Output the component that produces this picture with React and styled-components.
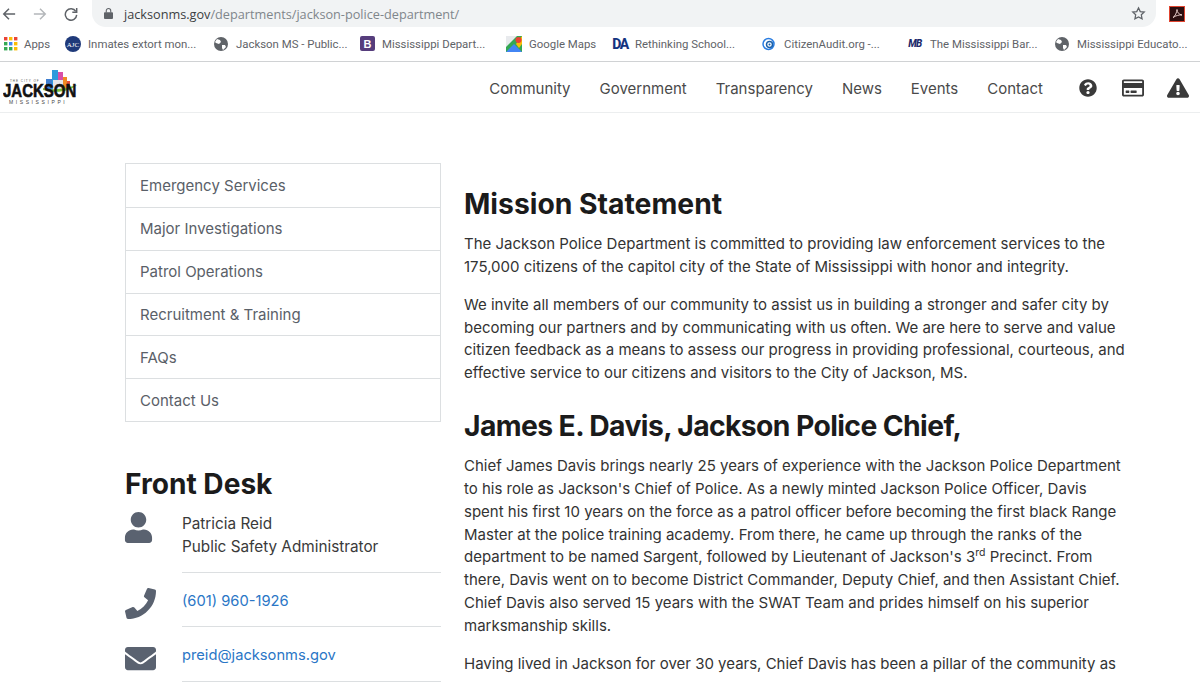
import styled, { createGlobalStyle } from "styled-components";
import {
  FaUser,
  FaPhone,
  FaEnvelope,
  FaQuestionCircle,
  FaRegCreditCard,
  FaExclamationTriangle,
} from "react-icons/fa";

const GlobalStyle = createGlobalStyle`
  html, body {
    margin: 0;
    padding: 0;
    height: 682px;
    overflow: hidden;
    background: #fff;
    font-family: "Inter", "Liberation Sans", sans-serif;
  }
  * { box-sizing: border-box; }
`;

const Toolbar = styled.div`
  display: flex;
  align-items: center;
  height: 27px;
  background: #fff;
`;

const NavButtons = styled.div`
  display: flex;
  align-items: center;
  gap: 17px;
  width: 92px;
  padding-left: 2px;
`;

const UrlBar = styled.div`
  display: flex;
  align-items: center;
  width: 1064px;
  height: 27px;
  padding: 0 10px 0 12px;
  background: #f1f3f4;
  border-radius: 0 0 14px 14px;
  font-family: "Open Sans", sans-serif;
  font-size: 12.7px;
  color: #80868b;
`;

const UrlHost = styled.span`
  margin-left: 11px;
  color: #3c4043;
`;

const StarWrap = styled.div`
  margin-left: auto;
  display: flex;
`;

const PdfIcon = styled.div`
  width: 16px;
  height: 16px;
  margin-left: 13px;
  background: #2b0f10;
  border: 1px solid #e0442f;
  display: flex;
  align-items: center;
  justify-content: center;
`;

const BookmarkBar = styled.div`
  display: flex;
  align-items: center;
  height: 35px;
  padding: 0 0 1px 3px;
  border-bottom: 1px solid #d0d2d4;
`;

const Bookmark = styled.div`
  display: flex;
  align-items: center;
  width: ${(props) => props.$w}px;
  flex: none;
  font-family: "Roboto", sans-serif;
  font-size: 11.4px;
  color: #5f6368;
  white-space: nowrap;
`;

const FavSlot = styled.span`
  display: flex;
  width: 16px;
  height: 16px;
  align-items: center;
  justify-content: center;
  margin-right: ${(props) => props.$gap || 7}px;
  flex: none;
`;

const DaMark = styled.span`
  color: #14337f;
  font-weight: 800;
  font-size: 14px;
  letter-spacing: -1.5px;
`;

const MbMark = styled.span`
  color: #1d2a6b;
  font-weight: 800;
  font-size: 10px;
  font-style: italic;
  letter-spacing: -0.5px;
`;

const Header = styled.header`
  display: flex;
  align-items: center;
  height: 51px;
  padding: 2px 11px 0 3px;
  border-bottom: 1px solid #eceeef;
`;

const LogoWrap = styled.div`
  display: flex;
  margin-top: -2px;
`;

const Nav = styled.nav`
  display: flex;
  align-items: center;
  gap: 29px;
  margin-left: auto;
`;

const NavLink = styled.a`
  font-size: 15px;
  color: #4a4a4a;
`;

const NavIcons = styled.div`
  display: flex;
  align-items: center;
  gap: 23px;
  margin-left: 36px;
  color: #3a3a3a;

  svg:first-child {
    margin-right: 2px;
  }
`;

const Page = styled.div`
  display: grid;
  grid-template-columns: 316px 656px;
  column-gap: 23px;
  padding: 50px 0 0 125px;
`;

const SideNav = styled.ul`
  list-style: none;
  margin: 0 0 42px;
  padding: 0;
  border: 1px solid #dcdfe1;
`;

const SideItem = styled.li`
  height: 42.850px;
  padding-left: 14px;
  display: flex;
  align-items: center;
  font-size: 15px;
  color: #5a6068;
  border-top: ${(props) => (props.$first ? "none" : "1px solid #dcdfe1")};
`;

const DeskTitle = styled.h2`
  margin: 0 0 8px;
  font-size: 28.100px;
  line-height: 40px;
  font-weight: 700;
  color: #1b1b1b;
`;

const ContactRow = styled.div`
  display: flex;
  height: ${(props) => props.$h}px;
`;

const ContactIcon = styled.div`
  width: 57px;
  flex: none;
  color: #5a6270;
  display: flex;
  align-items: ${(props) => (props.$top ? "flex-start" : "center")};
  padding-top: ${(props) => (props.$top ? 0 : 7)}px;

  svg {
    margin-left: ${(props) => (props.$top ? -2 : 0)}px;
  }
`;

const ContactBody = styled.div`
  flex: 1;
  display: flex;
  flex-direction: column;
  justify-content: ${(props) => (props.$top ? "flex-start" : "center")};
  padding-top: ${(props) => (props.$top ? 0 : 3)}px;
  border-bottom: 1px solid #dcdfe1;
  font-size: 15.3px;
  line-height: 23px;
  color: #3a3a3a;
`;

const ContactLink = styled.a`
  font-size: 14.7px;
  color: #2a76c6;
`;

const Main = styled.main`
  padding-top: 21px;
`;

const Heading = styled.h1`
  margin: ${(props) => (props.$second ? "21px 0 9px" : "0 0 9px")};
  font-size: 28.300px;
  letter-spacing: ${(props) => (props.$second ? "-0.6px" : "0")};
  line-height: 40px;
  font-weight: 700;
  color: #1b1b1b;
  white-space: nowrap;
`;

const Para = styled.p`
  margin: 0 0 15px;
  font-size: 15px;
  line-height: 22.850px;
  color: #333;
  white-space: nowrap;
`;

const Ord = styled.sup`
  font-size: 10.500px;
  line-height: 0;
`;

function Globe() {
  return (
    <svg width="14" height="14" viewBox="0 0 14 14">
      <circle cx="7" cy="7" r="7" fill="#5f6368" />
      <path d="M3 2l3 1 1 2-2 2-3-1-1-1zM8 8l3 0 1 2-3 3-1-2z" fill="#fff" />
    </svg>
  );
}

function AppsGrid() {
  const colors = ["#ea4335", "#fbbc05", "#ea4335", "#34a853", "#4285f4", "#fbbc05", "#34a853", "#34a853", "#fbbc05"];
  return (
    <svg width="14" height="14" viewBox="0 0 14 14">
      {colors.map((c, i) => (
        <rect key={i} x={(i % 3) * 5} y={Math.floor(i / 3) * 5} width="3.400" height="3.400" fill={c} />
      ))}
    </svg>
  );
}

function AjcIcon() {
  return (
    <svg width="16" height="16" viewBox="0 0 16 16">
      <circle cx="8" cy="8" r="8" fill="#1f3a7a" />
      <text x="8" y="10.500" textAnchor="middle" fontSize="7" fontFamily="Liberation Serif" fill="#fff">AJC</text>
    </svg>
  );
}

function BootstrapIcon() {
  return (
    <svg width="15" height="15" viewBox="0 0 15 15">
      <rect width="15" height="15" rx="2" fill="#563d7c" />
      <text x="7.500" y="11.500" textAnchor="middle" fontSize="11" fontWeight="700" fontFamily="Liberation Sans" fill="#fff">B</text>
    </svg>
  );
}

function MapsIcon() {
  return (
    <svg width="16" height="16" viewBox="0 0 16 16">
      <rect width="16" height="16" fill="#34a853" />
      <path d="M0 16L8 8l8 8z" fill="#4285f4" />
      <path d="M16 0v8l-3 4-3-4z" fill="#fbbc05" />
      <path d="M0 0h11L0 11z" fill="#e8eaed" />
      <circle cx="12.500" cy="4" r="3" fill="#ea4335" />
    </svg>
  );
}

function CitizenIcon() {
  return (
    <svg width="14" height="14" viewBox="0 0 14 14" fill="none" stroke="#2a7de1">
      <circle cx="6.500" cy="7" r="5.500" strokeWidth="1.500" />
      <circle cx="7.500" cy="7.500" r="3" strokeWidth="1.500" stroke="#1a5fa8" />
      <circle cx="7.500" cy="7.500" r="1" fill="#1a5fa8" stroke="none" />
    </svg>
  );
}

// buildings, swoosh and the three lines of the city logo
function Logo() {
  return (
    <svg width="76" height="40" viewBox="0 0 76 40">
      <rect x="43" y="12" width="8" height="11" fill="#3f7fd0" />
      <rect x="49" y="3" width="6" height="19" fill="#2e9bdc" />
      <rect x="55" y="5" width="5" height="17" fill="#d94fa8" />
      <rect x="50" y="13" width="10" height="10" fill="#e6e6ea" />
      <rect x="60" y="10" width="4" height="12" fill="#f08a24" />
      <rect x="64" y="14" width="3" height="8" fill="#e8503a" />
      <path d="M40 21c10 3 20 1 34-3-7 6-20 9-34 5z" fill="#7dbb3c" />
      <text x="7" y="15" fontSize="3" letterSpacing="1" fontFamily="Liberation Sans" fill="#555">THE CITY OF</text>
      <text transform="translate(0 30) scale(1 1.250)" fontSize="15" fontWeight="700" fontFamily="Liberation Sans" stroke="#111" strokeWidth="0.500" fill="#111">JACKSON</text>
      <text x="6" y="37" fontSize="5" letterSpacing="2.600" fontFamily="Liberation Sans" fill="#444">MISSISSIPPI</text>
    </svg>
  );
}

const bookmarks = [
  { w: 62, icon: <AppsGrid />, gap: 5, label: "Apps" },
  { w: 148, icon: <AjcIcon />, label: "Inmates extort mon..." },
  { w: 146, icon: <Globe />, label: "Jackson MS - Public..." },
  { w: 147, icon: <BootstrapIcon />, label: "Mississippi Depart..." },
  { w: 106, icon: <MapsIcon />, label: "Google Maps" },
  { w: 149, icon: <DaMark>DA</DaMark>, label: "Rethinking School..." },
  { w: 146, icon: <CitizenIcon />, label: "CitizenAudit.org -..." },
  { w: 147, icon: <MbMark>MB</MbMark>, label: "The Mississippi Bar..." },
  { w: 130, icon: <Globe />, label: "Mississippi Educato..." },
];

const sideItems = [
  "Emergency Services",
  "Major Investigations",
  "Patrol Operations",
  "Recruitment & Training",
  "FAQs",
  "Contact Us",
];

const navItems = ["Community", "Government", "Transparency", "News", "Events", "Contact"];

function App() {
  return (
    <>
      <GlobalStyle />
      <Toolbar>
        <NavButtons>
          <svg width="14" height="14" viewBox="0 0 16 16" fill="none" stroke="#5f6368" strokeWidth="1.700">
            <path d="M15 8H2M8 2L2 8l6 6" />
          </svg>
          <svg width="14" height="14" viewBox="0 0 16 16" fill="none" stroke="#b4b7ba" strokeWidth="1.700">
            <path d="M1 8h13M8 2l6 6-6 6" />
          </svg>
          <svg width="14" height="14" viewBox="0 0 16 16" fill="none" stroke="#5f6368" strokeWidth="1.700">
            <path d="M13.500 5A6.500 6.500 0 1 0 14.500 9" />
            <path d="M14.500 1v5H9.500" />
          </svg>
        </NavButtons>
        <UrlBar>
          <svg width="9" height="11" viewBox="0 0 10 12">
            <rect y="4.500" width="10" height="7.500" rx="1" fill="#5f6368" />
            <path d="M2.500 5V3a2.500 2.500 0 0 1 5 0v2" fill="none" stroke="#5f6368" strokeWidth="1.200" />
          </svg>
          <UrlHost>jacksonms.gov</UrlHost>/departments/jackson-police-department/
          <StarWrap>
            <svg width="15" height="15" viewBox="0 0 24 24" fill="none" stroke="#5f6368" strokeWidth="2">
              <path d="M12 3l2.800 5.900 6.400.800-4.700 4.400 1.200 6.400L12 17.400l-5.700 3.100 1.200-6.400L2.800 9.700l6.400-.800z" />
            </svg>
          </StarWrap>
        </UrlBar>
        <PdfIcon>
          <svg width="11" height="11" viewBox="0 0 11 11" fill="none" stroke="#f3d9d5" strokeWidth="0.900">
            <path d="M1 9.500C3 8.500 5 4 5 1.500c0 3 2 5 5 5.500-3-.2-6 .5-9 2.500z" />
          </svg>
        </PdfIcon>
      </Toolbar>
      <BookmarkBar>
        {bookmarks.map((b) => (
          <Bookmark key={b.label} $w={b.w}>
            <FavSlot $gap={b.gap}>{b.icon}</FavSlot>
            {b.label}
          </Bookmark>
        ))}
      </BookmarkBar>
      <Header>
        <LogoWrap>
          <Logo />
        </LogoWrap>
        <Nav>
          {navItems.map((n) => (
            <NavLink key={n}>{n}</NavLink>
          ))}
        </Nav>
        <NavIcons>
          <FaQuestionCircle size={18} />
          <FaRegCreditCard size={22} />
          <FaExclamationTriangle size={22} />
        </NavIcons>
      </Header>
      <Page>
        <aside>
          <SideNav>
            {sideItems.map((s, i) => (
              <SideItem key={s} $first={i === 0}>{s}</SideItem>
            ))}
          </SideNav>
          <DeskTitle>Front Desk</DeskTitle>
          <ContactRow $h={61}>
            <ContactIcon $top>
              <FaUser size={31} />
            </ContactIcon>
            <ContactBody $top>
              <span>Patricia Reid</span>
              <span>Public Safety Administrator</span>
            </ContactBody>
          </ContactRow>
          <ContactRow $h={54}>
            <ContactIcon>
              <FaPhone size={31} />
            </ContactIcon>
            <ContactBody>
              <ContactLink>(601) 960-1926</ContactLink>
            </ContactBody>
          </ContactRow>
          <ContactRow $h={55}>
            <ContactIcon>
              <FaEnvelope size={31} />
            </ContactIcon>
            <ContactBody>
              <ContactLink>preid@jacksonms.gov</ContactLink>
            </ContactBody>
          </ContactRow>
        </aside>
        <Main>
          <Heading>Mission Statement</Heading>
          <Para>
            The Jackson Police Department is committed to providing law enforcement services to the
            <br />
            175,000 citizens of the capitol city of the State of Mississippi with honor and integrity.
          </Para>
          <Para>
            We invite all members of our community to assist us in building a stronger and safer city by
            <br />
            becoming our partners and by communicating with us often. We are here to serve and value
            <br />
            citizen feedback as a means to assess our progress in providing professional, courteous, and
            <br />
            effective service to our citizens and visitors to the City of Jackson, MS.
          </Para>
          <Heading $second>James E. Davis, Jackson Police Chief,</Heading>
          <Para>
            Chief James Davis brings nearly 25 years of experience with the Jackson Police Department
            <br />
            to his role as Jackson's Chief of Police. As a newly minted Jackson Police Officer, Davis
            <br />
            spent his first 10 years on the force as a patrol officer before becoming the first black Range
            <br />
            Master at the police training academy. From there, he came up through the ranks of the
            <br />
            department to be named Sargent, followed by Lieutenant of Jackson's 3<Ord>rd</Ord> Precinct. From
            <br />
            there, Davis went on to become District Commander, Deputy Chief, and then Assistant Chief.
            <br />
            Chief Davis also served 15 years with the SWAT Team and prides himself on his superior
            <br />
            marksmanship skills.
          </Para>
          <Para>
            Having lived in Jackson for over 30 years, Chief Davis has been a pillar of the community as
          </Para>
        </Main>
      </Page>
    </>
  );
}

export default App;
